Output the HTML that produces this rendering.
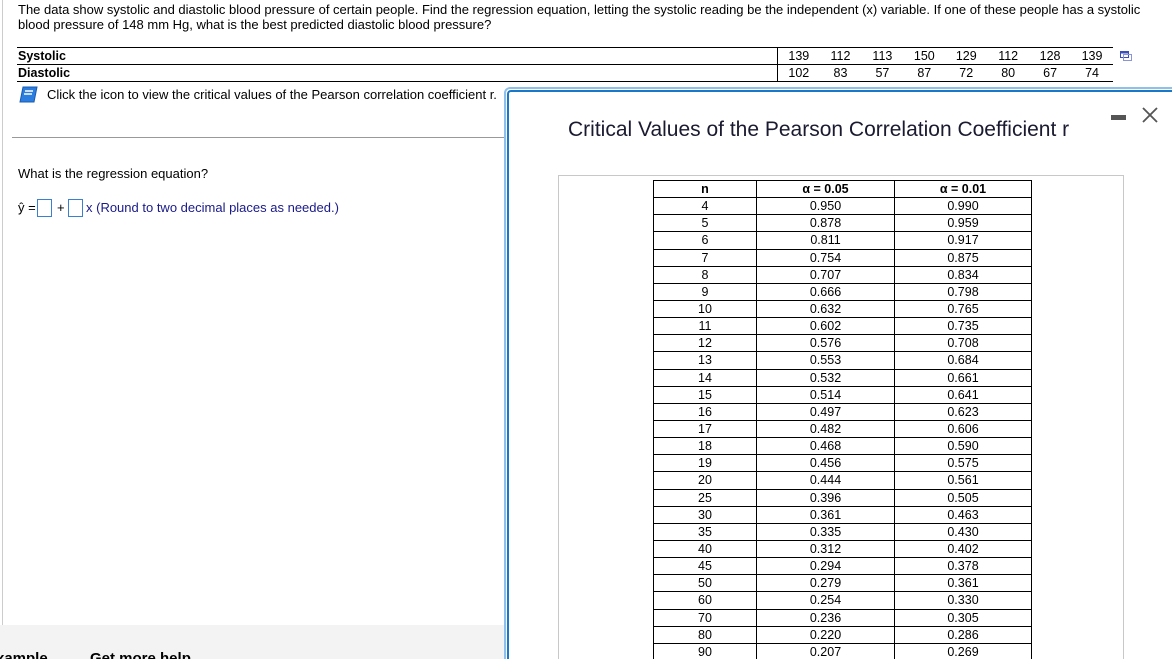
<!DOCTYPE html>
<html><head><meta charset="utf-8"><style>
*{margin:0;padding:0;box-sizing:border-box}
html,body{width:1172px;height:659px;overflow:hidden}
body{background:#fff;font-family:"Liberation Sans",Arial,sans-serif;color:#000;position:relative}
.abs{position:absolute}
.q{left:18px;top:2px;font-size:13px;line-height:15px;width:1140px}
.lb{position:absolute;left:2px;top:0;width:1px;height:625px;background:#ccc}
.dt{left:17px;top:47px;width:1096px;border-collapse:collapse;font-size:12.5px}
.dt td{height:17px;border-top:1.5px solid #000;border-bottom:1.5px solid #000;padding:0;line-height:14px}
.dt td.l{font-weight:bold;width:760px;border-right:1px solid #000;padding-left:1px}
.dt td.v{width:41.9px;text-align:center}
.foot{left:0;top:625px;width:505px;height:34px;background:#f3f3f3}
.modal{left:504px;top:87px;width:700px;height:600px;border:2px solid #8ec0ea;border-radius:6px 0 0 0;background:#fff}
.modal .in{position:absolute;left:1px;top:1px;right:0;bottom:0;border-left:2px solid #1a78c8;border-top:2px solid #1a78c8;border-radius:4px 0 0 0}
.ct{border-collapse:collapse;font-size:12.5px;position:absolute;left:653px;top:180px}
.ct td{border:1px solid #000;text-align:center;height:17.15px;line-height:14px;padding:0}
.ct tr:first-child td{font-weight:bold}
</style></head><body>
<div class="lb"></div>
<div class="abs q">The data show systolic and diastolic blood pressure of certain people. Find the regression equation, letting the systolic reading be the independent (x) variable. If one of these people has a systolic blood pressure of 148 mm Hg, what is the best predicted diastolic blood pressure?</div>
<table class="abs dt"><tr><td class="l">Systolic</td><td class="v">139</td><td class="v">112</td><td class="v">113</td><td class="v">150</td><td class="v">129</td><td class="v">112</td><td class="v">128</td><td class="v">139</td></tr>
<tr><td class="l">Diastolic</td><td class="v">102</td><td class="v">83</td><td class="v">57</td><td class="v">87</td><td class="v">72</td><td class="v">80</td><td class="v">67</td><td class="v">74</td></tr></table>
<svg class="abs" style="left:1120px;top:51px" width="12" height="10"><rect x="0.5" y="0.5" width="8" height="6" fill="#fff" stroke="#3a4fb8"/><rect x="0.5" y="0.5" width="8" height="2" fill="#3a4fb8"/><rect x="3.5" y="3.5" width="8" height="6" fill="none" stroke="#8a95d8"/></svg>
<svg class="abs" style="left:18px;top:86px" width="22" height="18"><path d="M5 1h14l-3 15H2z" fill="#2b7de0" stroke="#1a5cb0"/><path d="M7 5h8M6 8h8" stroke="#fff" stroke-width="1.5"/></svg>
<div class="abs" style="left:47px;top:87px;font-size:13px">Click the icon to view the critical values of the Pearson correlation coefficient r.</div>
<div class="abs" style="left:12px;top:137px;width:495px;height:1px;background:#999"></div>
<div class="abs" style="left:18px;top:166px;font-size:13px">What is the regression equation?</div>
<div class="abs" style="left:18px;top:200px;font-size:13px;color:#000">ŷ =</div>
<div class="abs" style="left:37px;top:199px;width:15px;height:18px;border:1px solid #3b7fd0"></div>
<div class="abs" style="left:57px;top:200px;font-size:13px">+</div>
<div class="abs" style="left:68px;top:199px;width:15px;height:18px;border:1px solid #3b7fd0"></div>
<div class="abs" style="left:86px;top:200px;font-size:13px;color:#1a1a8a">x (Round to two decimal places as needed.)</div>
<div class="abs foot"></div>
<div class="abs" style="left:-4px;top:650px;font-size:15px;font-weight:bold;white-space:nowrap">xample<span style="position:absolute;left:94px">Get more help</span></div>
<div class="abs modal"><div class="in"></div></div>
<div class="abs" style="left:568px;top:118px;font-size:21px;color:#1a1a30">Critical Values of the Pearson Correlation Coefficient r</div>
<div class="abs" style="left:1111px;top:115px;width:15px;height:5px;background:#555"></div>
<svg class="abs" style="left:1141px;top:106px" width="18" height="18"><path d="M2 2L16 16M16 2L2 16" stroke="#555" stroke-width="1.8"/></svg>
<div class="abs" style="left:558px;top:175px;width:566px;height:500px;border:1px solid #c8c8c8"></div>
<table class="ct">
<tr><td style="width:103px">n</td><td style="width:138px">α = 0.05</td><td style="width:137px">α = 0.01</td></tr>
<tr><td>4</td><td>0.950</td><td>0.990</td></tr>
<tr><td>5</td><td>0.878</td><td>0.959</td></tr>
<tr><td>6</td><td>0.811</td><td>0.917</td></tr>
<tr><td>7</td><td>0.754</td><td>0.875</td></tr>
<tr><td>8</td><td>0.707</td><td>0.834</td></tr>
<tr><td>9</td><td>0.666</td><td>0.798</td></tr>
<tr><td>10</td><td>0.632</td><td>0.765</td></tr>
<tr><td>11</td><td>0.602</td><td>0.735</td></tr>
<tr><td>12</td><td>0.576</td><td>0.708</td></tr>
<tr><td>13</td><td>0.553</td><td>0.684</td></tr>
<tr><td>14</td><td>0.532</td><td>0.661</td></tr>
<tr><td>15</td><td>0.514</td><td>0.641</td></tr>
<tr><td>16</td><td>0.497</td><td>0.623</td></tr>
<tr><td>17</td><td>0.482</td><td>0.606</td></tr>
<tr><td>18</td><td>0.468</td><td>0.590</td></tr>
<tr><td>19</td><td>0.456</td><td>0.575</td></tr>
<tr><td>20</td><td>0.444</td><td>0.561</td></tr>
<tr><td>25</td><td>0.396</td><td>0.505</td></tr>
<tr><td>30</td><td>0.361</td><td>0.463</td></tr>
<tr><td>35</td><td>0.335</td><td>0.430</td></tr>
<tr><td>40</td><td>0.312</td><td>0.402</td></tr>
<tr><td>45</td><td>0.294</td><td>0.378</td></tr>
<tr><td>50</td><td>0.279</td><td>0.361</td></tr>
<tr><td>60</td><td>0.254</td><td>0.330</td></tr>
<tr><td>70</td><td>0.236</td><td>0.305</td></tr>
<tr><td>80</td><td>0.220</td><td>0.286</td></tr>
<tr><td>90</td><td>0.207</td><td>0.269</td></tr>
</table>
</body></html>
